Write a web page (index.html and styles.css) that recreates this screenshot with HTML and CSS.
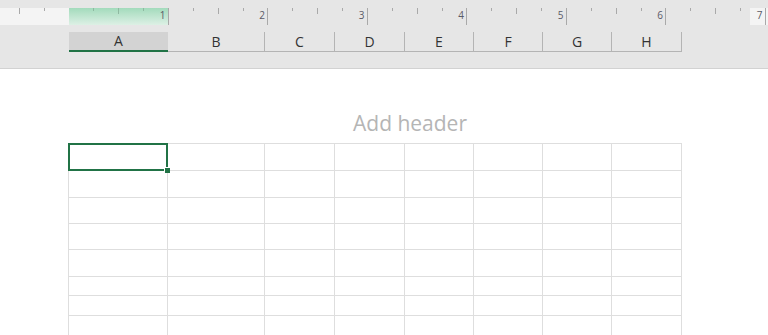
FILE: index.html
```html
<!DOCTYPE html>
<html lang="en">
<head>
  <meta charset="UTF-8">
  <title>Page Layout</title>
  <link rel="stylesheet" href="styles.css">
</head>
<body>

<div class="chrome">
  <div class="ruler">
    <div class="ruler-margin"></div>
    <div class="inch active"><span>1</span></div>
    <div class="inch"><span>2</span></div>
    <div class="inch"><span>3</span></div>
    <div class="inch"><span>4</span></div>
    <div class="inch"><span>5</span></div>
    <div class="inch"><span>6</span></div>
    <div class="inch"><span>7</span></div>
  </div>
  <div class="col-heads">
    <div class="col-head selected w-a">A</div>
    <div class="col-head w-b">B</div>
    <div class="col-head w-c">C</div>
    <div class="col-head w-d">D</div>
    <div class="col-head w-e">E</div>
    <div class="col-head w-f">F</div>
    <div class="col-head w-g">G</div>
    <div class="col-head w-h">H</div>
  </div>
</div>

<div class="page">
  <div class="page-header">Add header</div>
  <div class="sheet">
    <div></div><div></div><div></div><div></div><div></div><div></div><div></div><div></div>
    <div></div><div></div><div></div><div></div><div></div><div></div><div></div><div></div>
    <div></div><div></div><div></div><div></div><div></div><div></div><div></div><div></div>
    <div></div><div></div><div></div><div></div><div></div><div></div><div></div><div></div>
    <div></div><div></div><div></div><div></div><div></div><div></div><div></div><div></div>
    <div></div><div></div><div></div><div></div><div></div><div></div><div></div><div></div>
    <div></div><div></div><div></div><div></div><div></div><div></div><div></div><div></div>
    <div></div><div></div><div></div><div></div><div></div><div></div><div></div><div></div>
    <div class="selection"><span class="handle"></span></div>
  </div>
</div>

</body>
</html>
```

FILE: styles.css
```css
body {
  margin: 0;
  font-family: "Open Sans", "Liberation Sans", sans-serif;
  background: #fff;
  overflow: hidden;
}
.chrome {
  height: 69px;
  box-sizing: border-box;
  padding-top: 8px;
  background: #e6e6e6;
  border-bottom: 1px solid #d2d2d2;
}
.ruler {
  display: flex;
  height: 17px;
  margin-bottom: 7px;
  background:
    linear-gradient(#f4f4f4, #f4f4f4) 750px 0 / 18px 100% no-repeat,
    #e6e6e6;
}
.ruler-margin {
  flex: 0 0 69px;
  background:
    linear-gradient(#a9a9a9, #a9a9a9) 19px 0 / 1px 6px no-repeat,
    linear-gradient(#a9a9a9, #a9a9a9) 44px 0 / 1px 3px no-repeat,
    #f4f4f4;
}
.inch {
  flex: 0 0 99.5px;
  box-sizing: border-box;
  border-right: 1px solid #a9a9a9;
  text-align: right;
  font-size: 10px;
  line-height: 10px;
  color: #5a5a66;
  padding: 2px 2px 0 0;
  background:
    linear-gradient(#a9a9a9, #a9a9a9) 24px 0 / 1px 3px no-repeat,
    linear-gradient(#a9a9a9, #a9a9a9) 49px 0 / 1px 6px no-repeat,
    linear-gradient(#a9a9a9, #a9a9a9) 74px 0 / 1px 3px no-repeat;
}
.inch.active {
  background:
    linear-gradient(#8fb9a1, #8fb9a1) 24px 0 / 1px 3px no-repeat,
    linear-gradient(#8fb9a1, #8fb9a1) 49px 0 / 1px 6px no-repeat,
    linear-gradient(#8fb9a1, #8fb9a1) 74px 0 / 1px 3px no-repeat,
    linear-gradient(#a3dbbc, #ddf0e5);
}
.col-heads {
  display: flex;
  padding-left: 69px;
  height: 20px;
}
.col-head {
  box-sizing: border-box;
  height: 20px;
  border-right: 1px solid #b4b4b4;
  border-bottom: 1px solid #b4b4b4;
  text-align: center;
  font-size: 14px;
  line-height: 19px;
  color: #333;
}
.col-head.selected {
  background: #d3d3d3;
  border-right: none;
  border-bottom: 2px solid #217346;
  line-height: 18px;
}
.w-a { width: 99px; }
.w-b { width: 97px; }
.w-c { width: 70px; }
.w-d { width: 70px; }
.w-e { width: 69px; }
.w-f { width: 69px; }
.w-g { width: 69px; }
.w-h { width: 70px; }

.page-header {
  height: 74px;
  box-sizing: border-box;
  padding: 40px 0 0 353px;
  font-size: 21px;
  line-height: 28px;
  color: #b5b5b5;
}
.sheet {
  position: relative;
  display: grid;
  grid-template-columns: 99px 97px 70px 70px 69px 69px 69px 70px;
  grid-template-rows: 27px 27px 26px 26px 27px 19px 20px 20px;
  width: max-content;
  margin-left: 68px;
  border-left: 1px solid #dedede;
  border-top: 1px solid #dedede;
}
.sheet div {
  box-sizing: border-box;
  border-right: 1px solid #dedede;
  border-bottom: 1px solid #dedede;
}
.sheet .selection {
  position: absolute;
  left: -1px;
  top: -1px;
  width: 100px;
  height: 28px;
  border: 2px solid #217346;
}
.handle {
  position: absolute;
  right: -4px;
  bottom: -4px;
  width: 5px;
  height: 5px;
  background: #217346;
  border: 1px solid #fff;
  border-width: 1px 0 0 1px;
}
```
